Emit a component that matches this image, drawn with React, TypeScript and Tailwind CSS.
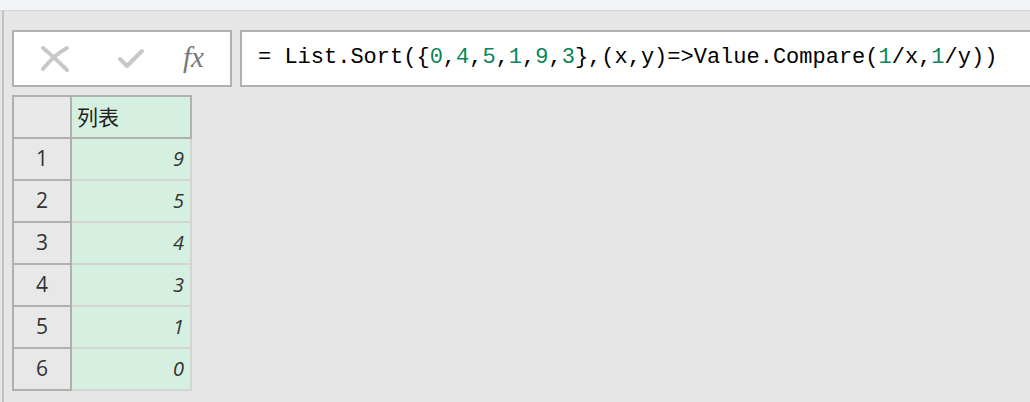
import React from "react";

const rows = [
  ["1", "9"],
  ["2", "5"],
  ["3", "4"],
  ["4", "3"],
  ["5", "1"],
  ["6", "0"],
];

function G({ children }: { children: React.ReactNode }) {
  return <span className="text-[#098658]">{children}</span>;
}

export default function App() {
  return (
    <div className="w-[1030px] h-[402px] overflow-hidden bg-[#e6e6e6] flex flex-col font-['Open_Sans',sans-serif]">
      <div className="h-[11px] bg-[#f3f4f6] border-b border-[#d6d6d6] shrink-0" />
      <div className="flex-1 flex border-l-[2px] border-[#c2c2c2] ml-[2px]">
        <div className="flex-1 flex flex-col pl-[8px] pt-[19px]">
          {/* formula bar */}
          <div className="flex gap-[8px] h-[57px] mr-[-4px]">
            <div className="w-[220px] border-2 border-[#b0b0b0] bg-white flex items-center">
              <svg width="30" height="28" viewBox="0 0 30 28" className="ml-[26px]">
                <path d="M3 3 Q14 12 27 25" stroke="#c8c8c8" strokeWidth="4" fill="none" strokeLinecap="round" />
                <path d="M27 3 Q14 10 3 24" stroke="#c8c8c8" strokeWidth="4" fill="none" strokeLinecap="round" />
              </svg>
              <svg width="26" height="22" viewBox="0 0 26 22" className="ml-[48px]">
                <path d="M2 11 L9 18 L24 3" stroke="#c8c8c8" strokeWidth="4" fill="none" strokeLinecap="round" strokeLinejoin="round" />
              </svg>
              <span className="ml-[39px] mb-[2px] text-[29px] italic text-[#777] font-['Liberation_Serif',serif] leading-none">fx</span>
            </div>
            <div className="flex-1 border-2 border-[#b0b0b0] bg-white flex items-center pl-[16px] pb-[1px]">
              <span className="font-['Liberation_Mono',monospace] text-[22px] text-black whitespace-pre leading-none">
                = List.Sort({"{"}<G>0</G>,<G>4</G>,<G>5</G>,<G>1</G>,<G>9</G>,<G>3</G>{"}"},(x,y)=&gt;Value.Compare(<G>1</G>/x,<G>1</G>/y))
              </span>
            </div>
          </div>
          {/* table */}
          <div className="mt-[8px] w-[180px] flex flex-col">
            <div className="flex h-[44px] border-2 border-[#b0b0b0]">
              <div className="w-[58px] border-r-2 border-[#b0b0b0] bg-[#e8e8e8]" />
              <div className="flex-1 bg-[#d5f0e0] flex items-center pl-[5px] text-[21px] text-[#222] font-['Noto_Sans_CJK_SC',sans-serif]">
                列表
              </div>
            </div>
            {rows.map(([i, v]) => (
              <div key={i} className="flex h-[42px]">
                <div className="w-[60px] border-l-2 border-r-2 border-b-2 border-[#b0b0b0] bg-[#e8e8e8] flex items-center justify-center text-[21px] text-[#333]">
                  {i}
                </div>
                <div className="flex-1 bg-[#d5f0e0] border-b-2 border-r-2 border-[#d4d4d4] flex items-center justify-end pr-[6px] text-[20px] italic text-[#333]">
                  {v}
                </div>
              </div>
            ))}
          </div>
        </div>
      </div>
    </div>
  );
}
